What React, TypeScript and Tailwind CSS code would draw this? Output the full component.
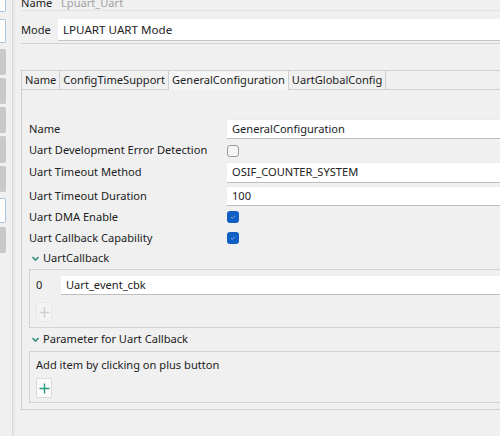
import React from "react";

const font = "font-['Noto_Sans','Open_Sans',sans-serif]";

function Chevron() {
  return (
    <svg width="9" height="7" viewBox="0 0 9 7" className="shrink-0">
      <polyline points="1.5,2 4.5,5 7.5,2" fill="none" stroke="#2f8f78" strokeWidth="1.6" />
    </svg>
  );
}

function Check({ on }: { on: boolean }) {
  if (!on) {
    return <div className="w-[12px] h-[12px] rounded-[3px] border border-[#9c9c9c] bg-[#f6f6f6]" />;
  }
  return (
    <div className="w-[12px] h-[12px] rounded-[3px] bg-[#0f5fc4] flex items-center justify-center">
      <svg width="8" height="8" viewBox="0 0 8 8">
        <polyline points="2,4.2 3.4,5.4 6,2.6" fill="none" stroke="#8fb4e6" strokeWidth="0.9" />
      </svg>
    </div>
  );
}

function Field({ value, className = "" }: { value: string; className?: string }) {
  return (
    <div
      className={`flex-1 bg-white border-t border-t-[#ececec] border-b border-b-[#bdbdbd] flex items-center pl-[5px] ${className}`}
    >
      {value}
    </div>
  );
}

function PlusButton({ disabled }: { disabled?: boolean }) {
  return (
    <div
      className={`w-[16px] h-[20px] rounded-[2px] border flex items-center justify-center ${
        disabled ? "border-[#e8e8e8] bg-[#f3f3f3]" : "border-[#dadada] bg-[#fbfbfb]"
      }`}
    >
      <svg width="11" height="11" viewBox="0 0 11 11">
        <path d="M5.5 0.5v10M0.5 5.5h10" stroke={disabled ? "#cfcfcf" : "#2a9a7c"} strokeWidth="1.4" />
      </svg>
    </div>
  );
}

const sideBoxes = [
  { mt: "mt-[-2px]", h: "h-[14px]", white: true },
  { mt: "mt-[7px]", h: "h-[24px]", white: true },
  { mt: "mt-[6px]", h: "h-[26px]", white: false },
  { mt: "mt-[3px]", h: "h-[26px]", white: false },
  { mt: "mt-[3px]", h: "h-[26px]", white: false },
  { mt: "mt-[3px]", h: "h-[27px]", white: false },
  { mt: "mt-[3px]", h: "h-[26px]", white: false },
  { mt: "mt-[6px]", h: "h-[25px]", white: true },
  { mt: "mt-[4px]", h: "h-[26px]", white: false },
];

const tabs = ["Name", "ConfigTimeSupport", "GeneralConfiguration", "UartGlobalConfig"];

export default function App() {
  return (
    <div className={`w-[500px] h-[436px] overflow-hidden bg-[#f0f0f0] flex text-[11.1px] text-[#222] ${font}`}>
      <div className="w-[6px] shrink-0 flex flex-col">
        {sideBoxes.map((b, i) => (
          <div
            key={i}
            className={`${b.mt} ${b.h} w-[6px] rounded-r-[2px] ${
              b.white ? "bg-white border border-l-0 border-[#a9c4e0]" : "bg-[#c9c9c9]"
            }`}
          />
        ))}
      </div>
      <div className="shrink-0 ml-[6px] w-[3px] border-l border-l-[#d9d9d9] border-r-[2px] border-r-[#e9e9e9]" />
      <div className="flex-1 min-w-0 pl-[6px] flex flex-col whitespace-nowrap">
        <div className="-mt-[4px] h-[15px] flex items-center border-b border-[#e2e2e2]">
          <span className="w-[40px]">Name</span>
          <span className="text-[#a3a3a3]">Lpuart_Uart</span>
        </div>
        <div className="mt-[8px] h-[22px] flex items-stretch">
          <span className="w-[37px] flex items-center">Mode</span>
          <div className="flex-1 bg-white border-b border-[#c3c3c3] flex items-center pl-[5px] text-[11.6px]">
            LPUART UART Mode
          </div>
        </div>
        <div className="mt-[2px] border-b border-[#d2d2d2]" />

        <div className="mt-[26px] h-[20px] flex">
          {tabs.map((t, i) => {
            const sel = i === 2;
            return (
              <div
                key={t}
                className={`px-[3px] flex items-center border-t border-r border-[#d0d0d0] ${
                  i === 0 ? "border-l" : ""
                } ${sel ? "bg-[#f6f6f6]" : "border-b"}`}
              >
                {t}
              </div>
            );
          })}
          <div className="flex-1 border-t border-b border-[#d0d0d0]" />
        </div>

        <div className="h-[320px] border-l border-b border-[#d0d0d0] pl-[7px] pt-[29px] flex flex-col">
          <div className="flex h-[21px] items-stretch">
            <span className="w-[198px] flex items-center">Name</span>
            <Field value="GeneralConfiguration" className="mb-[1px]" />
          </div>
          <div className="flex h-[21px] items-center">
            <span className="w-[198px]">Uart Development Error Detection</span>
            <Check on={false} />
          </div>
          <div className="flex h-[21px] mt-[1px] items-stretch">
            <span className="w-[198px] flex items-center">Uart Timeout Method</span>
            <Field value="OSIF_COUNTER_SYSTEM" />
          </div>
          <div className="flex h-[20px] mt-[3px] items-stretch">
            <span className="w-[198px] flex items-center">Uart Timeout Duration</span>
            <Field value="100" />
          </div>
          <div className="flex h-[22px] items-center">
            <span className="w-[198px]">Uart DMA Enable</span>
            <Check on />
          </div>
          <div className="flex h-[20px] items-center">
            <span className="w-[198px]">Uart Callback Capability</span>
            <Check on />
          </div>

          <div className="flex h-[20px] items-center gap-[3px] pl-[2px]">
            <Chevron />
            <span>UartCallback</span>
          </div>
          <div className="mt-[1px] border border-r-0 border-[#d2d2d2] pl-[6px] pt-[6px] pb-[5px] flex flex-col">
            <div className="flex h-[19px] items-stretch">
              <span className="w-[25px] flex items-center">0</span>
              <Field value="Uart_event_cbk" className="border-t-0" />
            </div>
            <div className="mt-[7px]">
              <PlusButton disabled />
            </div>
          </div>

          <div className="flex h-[23px] items-center gap-[3px] pl-[2px]">
            <Chevron />
            <span>Parameter for Uart Callback</span>
          </div>
          <div className="border border-r-0 border-[#d2d2d2] pl-[6px] pt-[5px] pb-[4px] flex flex-col">
            <div className="h-[16px] flex items-center">Add item by clicking on plus button</div>
            <div className="mt-[5px]">
              <PlusButton />
            </div>
          </div>
        </div>
      </div>
    </div>
  );
}
